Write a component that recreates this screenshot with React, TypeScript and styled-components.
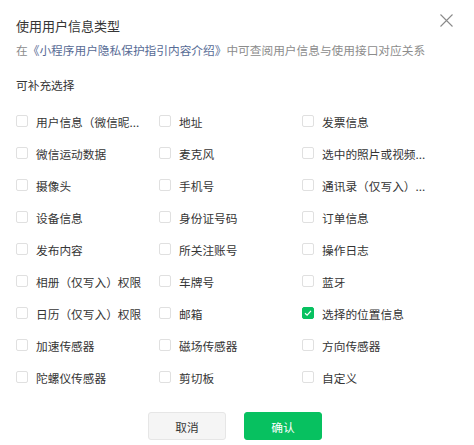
import styled, { createGlobalStyle } from 'styled-components';

const Global = createGlobalStyle`
  body {
    margin: 0;
    background: #ffffff;
    font-family: 'Noto Sans CJK SC', 'Noto Sans', sans-serif;
    color: #353535;
  }
`;

const Dialog = styled.div`
  width: 474px;
  height: 445px;
  box-sizing: border-box;
  padding: 16px 21px 0 16px;
  display: flex;
  flex-direction: column;
`;

const Header = styled.div`
  display: flex;
  justify-content: space-between;
  align-items: flex-start;
`;

const Title = styled.h3`
  margin: 0;
  font-size: 13px;
  line-height: 20px;
  font-weight: 400;
  color: #353535;
`;

const Close = styled.button`
  border: none;
  background: none;
  padding: 0;
  margin-top: -2px;
  width: 13px;
  height: 13px;
  display: flex;
  cursor: pointer;
`;

const Desc = styled.p`
  margin: 5px 0 0;
  font-size: 11.7px;
  line-height: 18px;
  color: #8c8c8c;
  white-space: nowrap;
`;

const Link = styled.a`
  color: #576b95;
  text-decoration: none;
`;

const Section = styled.div`
  margin-top: 17px;
  font-size: 11.7px;
  line-height: 18px;
  color: #353535;
`;

const Grid = styled.div`
  margin-top: 11px;
  display: grid;
  grid-template-columns: 143px 143px 1fr;
  grid-auto-rows: 32px;
`;

const Option = styled.label`
  display: flex;
  align-items: center;
  gap: 8px;
  font-size: 11.7px;
  color: #353535;
  cursor: pointer;
`;

const Box = styled.span<{ $checked?: boolean }>`
  flex: none;
  width: 12px;
  height: 12px;
  box-sizing: border-box;
  border-radius: 2px;
  border: 1px solid ${(p) => (p.$checked ? '#07c160' : '#e0e0e0')};
  background: ${(p) => (p.$checked ? '#07c160' : '#fff')};
  display: flex;
  align-items: center;
  justify-content: center;
`;

const Label = styled.span`
  white-space: nowrap;
`;

const Footer = styled.div`
  margin-top: 19px;
  display: flex;
  justify-content: center;
  gap: 18px;
  padding-left: 1px;
`;

const Btn = styled.button<{ $primary?: boolean }>`
  width: 78px;
  height: 28px;
  border-radius: 3px;
  font-family: inherit;
  font-size: 11.7px;
  border: 1px solid ${(p) => (p.$primary ? '#07c160' : '#e6e6e6')};
  background: ${(p) => (p.$primary ? '#07c160' : '#f5f5f5')};
  color: ${(p) => (p.$primary ? '#fff' : '#353535')};
  cursor: pointer;
`;

const options = [
  '用户信息（微信昵称、头像）',
  '地址',
  '发票信息',
  '微信运动数据',
  '麦克风',
  '选中的照片或视频信息',
  '摄像头',
  '手机号',
  '通讯录（仅写入）权限',
  '设备信息',
  '身份证号码',
  '订单信息',
  '发布内容',
  '所关注账号',
  '操作日志',
  '相册（仅写入）权限',
  '车牌号',
  '蓝牙',
  '日历（仅写入）权限',
  '邮箱',
  '选择的位置信息',
  '加速传感器',
  '磁场传感器',
  '方向传感器',
  '陀螺仪传感器',
  '剪切板',
  '自定义',
];

const checked = ['选择的位置信息'];

// long labels are cut to 8 chars like the dialog does
const short = (s: string) => (s.length > 9 ? s.slice(0, 8) + '...' : s);

const App = () => {
  return (
    <Dialog>
      <Global />
      <Header>
        <Title>使用用户信息类型</Title>
        <Close aria-label="关闭">
          <svg width="13" height="13" viewBox="0 0 13 13">
            <path d="M0.5 0.5 L12.5 12.5 M12.5 0.5 L0.5 12.5" stroke="#8a8a8a" strokeWidth="1.1" />
          </svg>
        </Close>
      </Header>
      <Desc>
        在<Link href="#">《小程序用户隐私保护指引内容介绍》</Link>中可查阅用户信息与使用接口对应关系
      </Desc>
      <Section>可补充选择</Section>
      <Grid>
        {options.map((o) => {
          const on = checked.includes(o);
          return (
            <Option key={o} title={o}>
              <Box $checked={on}>
                {on && (
                  <svg width="8" height="8" viewBox="0 0 8 8">
                    <path d="M1 4.2 L3.1 6.2 L7 1.8" fill="none" stroke="#fff" strokeWidth="1.2" />
                  </svg>
                )}
              </Box>
              <Label>{short(o)}</Label>
            </Option>
          );
        })}
      </Grid>
      <Footer>
        <Btn>取消</Btn>
        <Btn $primary>确认</Btn>
      </Footer>
    </Dialog>
  );
};

export default App;
